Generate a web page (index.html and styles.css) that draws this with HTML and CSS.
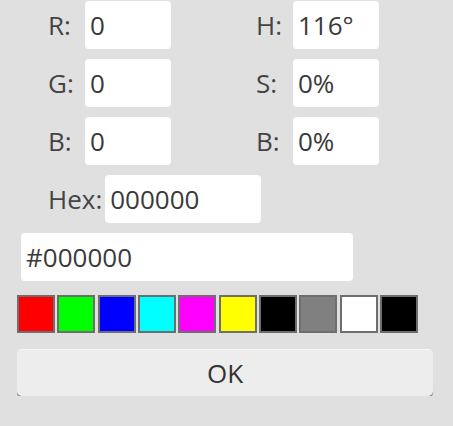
FILE: index.html
```html
<!DOCTYPE html>
<html lang="en">
<head>
    <meta charset="UTF-8">
    <meta name="viewport" content="width=device-width, initial-scale=1.0">
    <title>Color Picker</title>
    <link rel="stylesheet" href="styles.css">
</head>
<body>
    <div id="picker">
        <div id="channels">
            <label class="channel"><span class="channel-name">R:</span><input type="text" value="0"></label>
            <label class="channel"><span class="channel-name">H:</span><input type="text" value="116°"></label>
            <label class="channel"><span class="channel-name">G:</span><input type="text" value="0"></label>
            <label class="channel"><span class="channel-name">S:</span><input type="text" value="0%"></label>
            <label class="channel"><span class="channel-name">B:</span><input type="text" value="0"></label>
            <label class="channel"><span class="channel-name">B:</span><input type="text" value="0%"></label>
        </div>

        <label id="hex-row"><span class="hex-name">Hex:</span><input type="text" value="000000"></label>

        <input type="text" id="color-value" value="#000000">

        <div id="swatches">
            <button class="swatch" style="background-color: #ff0000"></button>
            <button class="swatch" style="background-color: #00ff00"></button>
            <button class="swatch" style="background-color: #0000ff"></button>
            <button class="swatch" style="background-color: #00ffff"></button>
            <button class="swatch" style="background-color: #ff00ff"></button>
            <button class="swatch" style="background-color: #ffff00"></button>
            <button class="swatch" style="background-color: #000000"></button>
            <button class="swatch" style="background-color: #808080"></button>
            <button class="swatch" style="background-color: #ffffff"></button>
            <button class="swatch" style="background-color: #000000"></button>
        </div>

        <button id="ok-button">OK</button>
    </div>
</body>
</html>
```

FILE: styles.css
```css
/* color picker dialog */
body {
    margin: 0;
    padding: 1px 0 0 0;
    background-color: #e0e0e0;
    font-family: "Open Sans", sans-serif;
    font-size: 26px;
    color: #444;
}
input {
    font-family: inherit;
    font-size: 26px;
    color: #3a3a3a;
    background-color: #fff;
    border: none;
    border-radius: 4px;
    height: 48px;
    padding: 0 5px;
    box-sizing: border-box;
    outline: none;
}
#channels {
    display: grid;
    grid-template-columns: 123px 123px;
    column-gap: 85px;
    row-gap: 10px;
    padding-left: 48px;
}
.channel {
    display: flex;
    align-items: center;
}
.channel-name {
    width: 37px;
}
.channel input {
    width: 86px;
}
#hex-row {
    display: flex;
    align-items: center;
    margin: 10px 0 0 48px;
}
.hex-name {
    margin-right: 3px;
}
#hex-row input {
    width: 156px;
}
#color-value {
    display: block;
    width: 332px;
    margin: 10px 0 0 21px;
}
#swatches {
    display: flex;
    justify-content: space-between;
    width: 401px;
    margin: 14px 0 0 17px;
}
.swatch {
    width: 38px;
    height: 38px;
    padding: 0;
    border: 2px solid #6e6e6e;
    cursor: pointer;
}
#ok-button {
    display: block;
    width: 416px;
    height: 47px;
    margin: 16px 0 0 17px;
    padding: 0;
    font-family: inherit;
    font-size: 26px;
    color: #333;
    background-color: #ededed;
    border: none;
    border-top: 1px solid #f7f7f7;
    border-radius: 5px;
    box-shadow: 0 2px 0 #8f8f8f;
    cursor: pointer;
}
```
